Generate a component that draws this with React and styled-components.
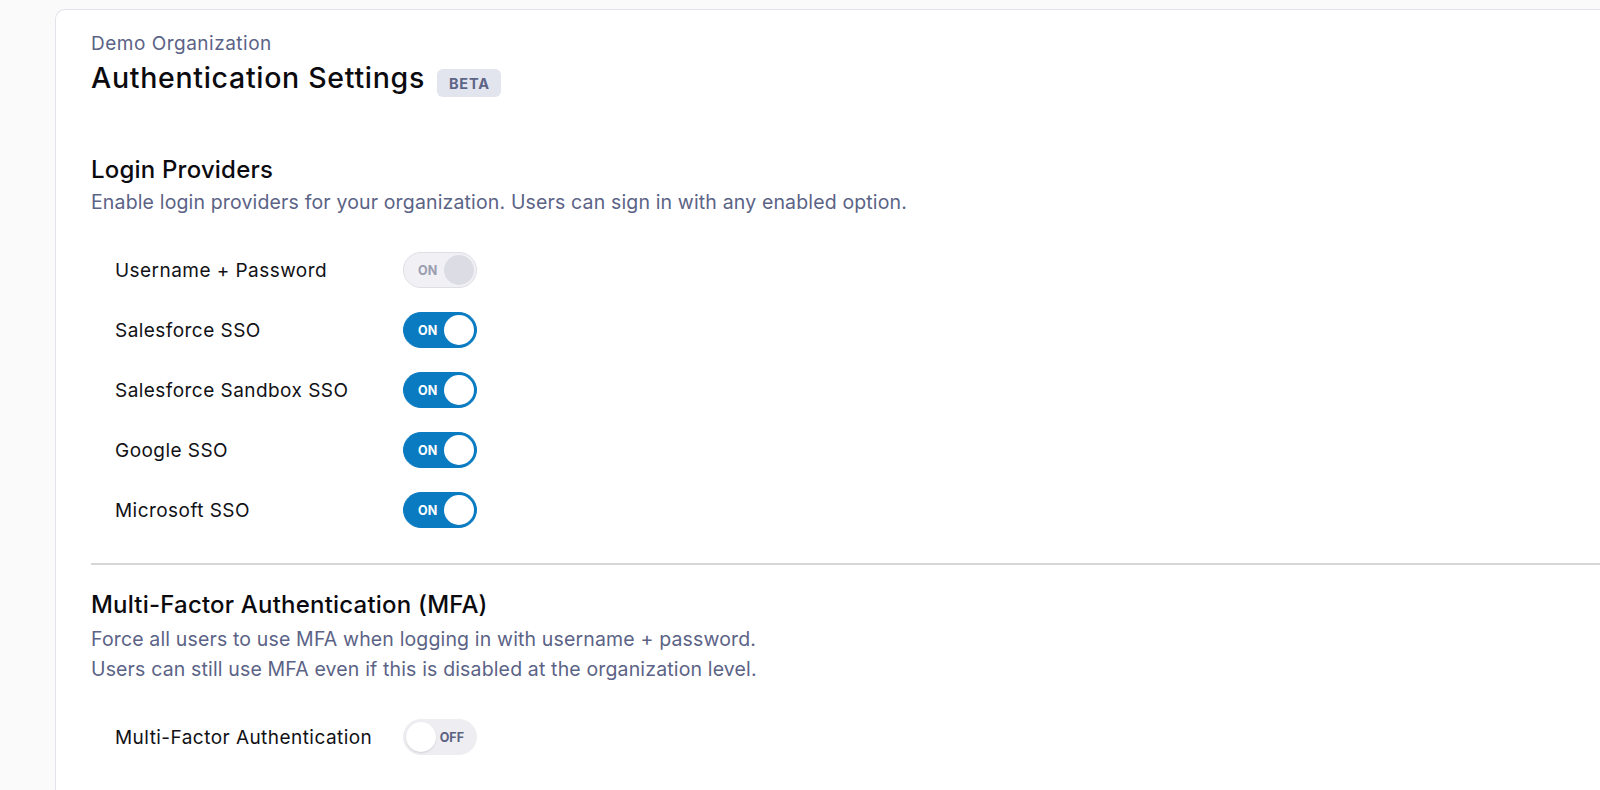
import React from "react";
import styled, { createGlobalStyle } from "styled-components";

const Global = createGlobalStyle`
  html, body { margin: 0; padding: 0; background: #fafafa; overflow: hidden; }
  body { font-family: Inter, "Noto Sans", sans-serif; -webkit-font-smoothing: antialiased; }
  * { box-sizing: border-box; }
`;

const Page = styled.div`
  min-height: 100vh;
  padding: 9px 0 0 55px;
`;

const Card = styled.div`
  background: #ffffff;
  border: 1px solid #e3e3e9;
  border-right: none;
  border-radius: 10px 0 0 0;
  min-height: 820px;
  padding: 22px 0 0 35px;
`;

const Org = styled.div`
  font-size: 19px;
  line-height: 24px;
  letter-spacing: 0.5px;
  color: #5b6386;
`;

const TitleRow = styled.div`
  display: flex;
  align-items: flex-start;
  gap: 12px;
  margin-top: 5px;
`;

const Title = styled.h1`
  margin: 0;
  font-size: 28.5px;
  line-height: 34px;
  font-weight: 500;
  color: #0b0b0f;
  letter-spacing: 0.7px;
`;

const Badge = styled.span`
  display: inline-flex;
  align-items: center;
  justify-content: center;
  height: 28px;
  padding: 0 11px 0 12px;
  margin-top: 8px;
  border-radius: 6px;
  background: #e3e5ee;
  color: #5c6487;
  font-size: 14.5px;
  font-weight: 700;
  letter-spacing: 0.8px;
`;

const Section = styled.section`
  margin-top: ${(p) => p.$top || 0}px;
`;

const SectionTitle = styled.h2`
  margin: 0;
  font-size: 24px;
  line-height: 30px;
  font-weight: 500;
  letter-spacing: 0.2px;
  color: #0b0b0f;
`;

const Desc = styled.div`
  margin-top: ${(p) => p.$top}px;
  font-size: 19.5px;
  line-height: 30px;
  letter-spacing: 0.15px;
  color: #5b6386;
`;

const Rows = styled.div`
  display: flex;
  flex-direction: column;
  gap: 24px;
  margin-top: ${(p) => p.$top}px;
  padding-left: 24px;
`;

const Row = styled.div`
  display: grid;
  grid-template-columns: 288px 74px;
  align-items: center;
  height: 36px;
`;

const Label = styled.span`
  font-size: 19px;
  letter-spacing: 0.45px;
  color: #111116;
`;

const Track = styled.div`
  position: relative;
  width: 74px;
  height: 36px;
  border-radius: 18px;
  display: flex;
  align-items: center;
  justify-content: ${(p) => (p.$on ? "flex-start" : "flex-end")};
  padding: ${(p) => (p.$on ? "0 0 0 14px" : "0 12px 0 0")};
  background: ${(p) => (p.$disabled ? "#f1f1f5" : p.$on ? "#0a7bc1" : "#eeeef2")};
  border: 1px solid ${(p) => (p.$disabled ? "#dedee5" : p.$on ? "#0a7bc1" : "#eeeef2")};
`;

const TrackText = styled.span`
  font-size: 12.5px;
  font-weight: 700;
  color: ${(p) => (p.$disabled ? "#9b9db0" : p.$on ? "#ffffff" : "#5c6282")};
`;

const Knob = styled.span`
  position: absolute;
  top: 2px;
  ${(p) => (p.$on ? "right: 2px;" : "left: 2px;")}
  width: 30px;
  height: 30px;
  border-radius: 50%;
  background: ${(p) => (p.$disabled ? "#dcdce4" : "#ffffff")};
  box-shadow: ${(p) => (p.$on || p.$disabled ? "none" : "0 1px 2px rgba(0,0,0,0.12)")};
`;

const Divider = styled.hr`
  margin: 35px 0 0 0;
  border: none;
  height: 2px;
  background: #d6d6d8;
`;

function Toggle({ on, disabled }) {
  return (
    <Track $on={on} $disabled={disabled}>
      <TrackText $on={on} $disabled={disabled}>{on ? "ON" : "OFF"}</TrackText>
      <Knob $on={on} $disabled={disabled} />
    </Track>
  );
}

const providers = [
  { name: "Username + Password", on: true, disabled: true },
  { name: "Salesforce SSO", on: true },
  { name: "Salesforce Sandbox SSO", on: true },
  { name: "Google SSO", on: true },
  { name: "Microsoft SSO", on: true },
];

export default function App() {
  return (
    <>
      <Global />
      <Page>
        <Card>
          <Org>Demo Organization</Org>
          <TitleRow>
            <Title>Authentication Settings</Title>
            <Badge>BETA</Badge>
          </TitleRow>

          <Section $top={58}>
            <SectionTitle>Login Providers</SectionTitle>
            <Desc $top={2}>Enable login providers for your organization. Users can sign in with any enabled option.</Desc>
            <Rows $top={35}>
              {providers.map((p) => (
                <Row key={p.name}>
                  <Label>{p.name}</Label>
                  <Toggle on={p.on} disabled={p.disabled} />
                </Row>
              ))}
            </Rows>
          </Section>

          <Divider />

          <Section $top={25}>
            <SectionTitle>Multi-Factor Authentication (MFA)</SectionTitle>
            <Desc $top={4}>
              Force all users to use MFA when logging in with username + password.
              <br />
              Users can still use MFA even if this is disabled at the organization level.
            </Desc>
            <Rows $top={35}>
              <Row>
                <Label>Multi-Factor Authentication</Label>
                <Toggle on={false} />
              </Row>
            </Rows>
          </Section>
        </Card>
      </Page>
    </>
  );
}
